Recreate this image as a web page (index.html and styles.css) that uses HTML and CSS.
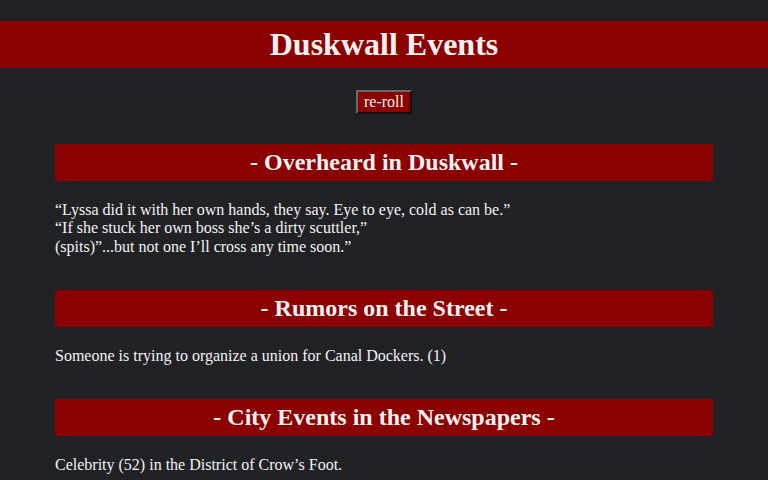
FILE: index.html
```html
<html>
    <head>
	<title>Duskwall Events</title>
		<link rel="stylesheet" href="styles.css">
	    </head>
	<body>
		<h1 class="banner">Duskwall Events</h1>
		<div class="controls">
			<button id="reroll">re-roll</button>
		</div>
		<div class="section">
			<h2 class="heading">- Overheard in Duskwall -</h2>
			<p class="entry">“Lyssa did it with her own hands, they say. Eye to eye, cold as can be.”<br>
			“If she stuck her own boss she’s a dirty scuttler,”<br>
			(spits)”...but not one I’ll cross any time soon.”</p>
		</div>
		<div class="section">
			<h2 class="heading">- Rumors on the Street -</h2>
			<p class="entry">Someone is trying to organize a union for Canal Dockers. (1)</p>
		</div>
		<div class="section">
			<h2 class="heading">- City Events in the Newspapers -</h2>
			<p class="entry">Celebrity (52) in the District of Crow’s Foot.</p>
		</div>
	</body>
</html>
```
FILE: styles.css
```css
body{
	margin:0;
	padding:0;
	background-color:#212226;
	color:#f2f2f2;
	font-family:"Liberation Serif", serif;
	font-size:16px;
}

.banner{
	margin:21px 0 22px 0;
	padding:5px;
	background-color:#8b0000;
	text-align:center;
	font-size:32px;
	line-height:37px;
}

.controls{
	text-align:center;
	margin-bottom:30px;
	height:24px;
}

#reroll{
	font-family:"Liberation Serif", serif;
	font-size:16px;
	line-height:18px;
	color:#f2f2f2;
	background-color:#8b0000;
	padding:1px 6px;
	border:2px solid;
	border-color:#6b6b6b #111 #111 #6b6b6b;
	height:24px;
	width:56px;
}

.section{
	padding:0 55px;
	margin-bottom:33.8px;
}

.heading{
	margin:0 0 20px 0;
	padding:5px;
	background-color:#8b0000;
	text-align:center;
	font-size:24px;
	line-height:27px;
}

.entry{
	margin:0;
	line-height:18.4px;
}
```
